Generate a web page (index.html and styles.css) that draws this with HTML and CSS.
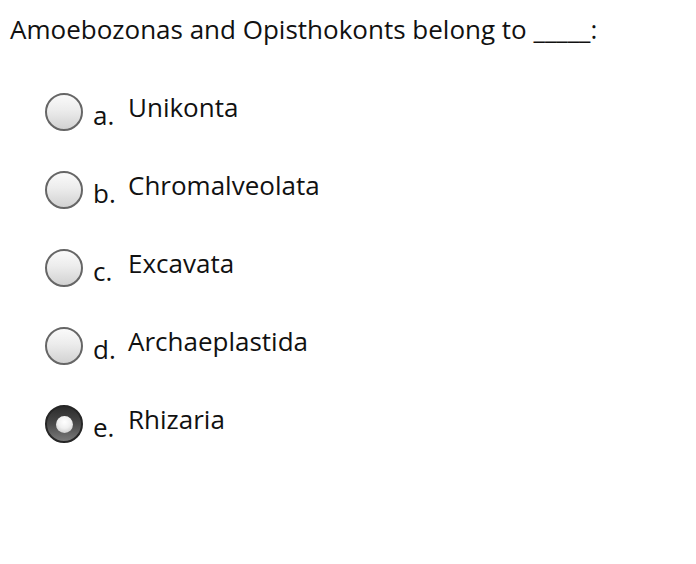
FILE: index.html
```html
<!DOCTYPE html>
<html>
<head>
<meta charset="utf-8">
<link rel="stylesheet" href="styles.css">
</head>
<body>
<div class="question">Amoebozonas and Opisthokonts belong to _____:</div>
<div class="options">
  <div class="option"><span class="radio"></span><span class="letter">a.</span><span class="text">Unikonta</span></div>
  <div class="option"><span class="radio"></span><span class="letter">b.</span><span class="text">Chromalveolata</span></div>
  <div class="option"><span class="radio"></span><span class="letter">c.</span><span class="text">Excavata</span></div>
  <div class="option"><span class="radio"></span><span class="letter">d.</span><span class="text">Archaeplastida</span></div>
  <div class="option"><span class="radio checked"></span><span class="letter">e.</span><span class="text">Rhizaria</span></div>
</div>
</body>
</html>
```
FILE: styles.css
```css
html, body {
  margin: 0;
  padding: 0;
  background: #fff;
}
body {
  font-family: "Open Sans", sans-serif;
  color: #111;
  font-size: 26px;
}
.question {
  padding: 11px 0 0 10px;
  line-height: 36px;
}
.options {
  display: flex;
  flex-direction: column;
  gap: 40px;
  padding: 46px 0 0 45px;
}
.option {
  display: flex;
  align-items: flex-start;
  height: 38px;
}
.radio {
  box-sizing: border-box;
  width: 38px;
  height: 38px;
  border-radius: 50%;
  border: 2px solid #666;
  background: linear-gradient(180deg, #fafafa 0%, #ececec 45%, #d2d2d2 100%);
  flex: none;
  position: relative;
}
.radio.checked {
  border-color: #262626;
  background: linear-gradient(180deg, #2c2c2c 0%, #4a4a4a 50%, #7a7a7a 100%);
}
.radio.checked::after {
  content: "";
  position: absolute;
  left: 50%;
  top: 50%;
  width: 17px;
  height: 17px;
  margin: -8.5px 0 0 -8.5px;
  border-radius: 50%;
  background: radial-gradient(circle at 50% 35%, #fff 0%, #f0f0f0 45%, #bdbdbd 100%);
}
.letter {
  box-sizing: border-box;
  width: 45px;
  padding: 4px 0 0 10px;
  line-height: 36px;
}
.text {
  line-height: 36px;
  margin-top: -4px;
}
```
